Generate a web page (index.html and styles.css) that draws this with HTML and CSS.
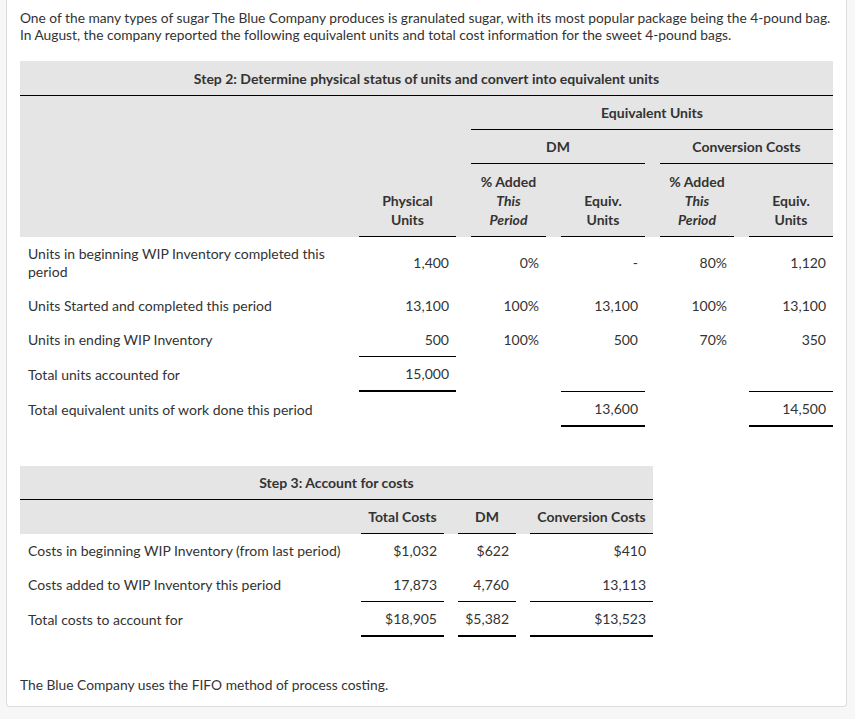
FILE: index.html
```html
<!DOCTYPE html>
<html>
<head>
<meta charset="utf-8">
<link rel="stylesheet" href="styles.css">
</head>
<body>
<div class="card">
  <p class="intro">One of the many types of sugar The Blue Company produces is granulated sugar, with its most popular package being the 4-pound bag. In August, the company reported the following equivalent units and total cost information for the sweet 4-pound bags.</p>

  <table class="tbl step2">
    <colgroup>
      <col class="c-label2"><col class="c-phys"><col class="c-add"><col class="c-eq"><col class="c-add2"><col class="c-eq">
    </colgroup>
    <thead>
      <tr class="title-row"><th colspan="6">Step 2: Determine physical status of units and convert into equivalent units</th></tr>
      <tr class="hrow"><th></th><th></th><th colspan="4" class="hc"><div class="hd ul">Equivalent Units</div></th></tr>
      <tr class="hrow"><th></th><th></th><th colspan="2" class="hc"><div class="hd ul">DM</div></th><th colspan="2" class="hc"><div class="hd ul">Conversion Costs</div></th></tr>
      <tr class="hrow">
        <th></th>
        <th class="hc"><div class="hd tall ul">Physical<br>Units</div></th>
        <th class="hc"><div class="hd tall ul">% Added<br><i>This</i><br><i>Period</i></div></th>
        <th class="hc"><div class="hd tall ul">Equiv.<br>Units</div></th>
        <th class="hc"><div class="hd tall ul">% Added<br><i>This</i><br><i>Period</i></div></th>
        <th class="hc"><div class="hd tall ul">Equiv.<br>Units</div></th>
      </tr>
    </thead>
    <tbody>
      <tr>
        <td class="lbl">Units in beginning WIP Inventory completed this period</td>
        <td class="nc"><div class="num">1,400</div></td>
        <td class="nc"><div class="num">0%</div></td>
        <td class="nc"><div class="num">-</div></td>
        <td class="nc"><div class="num">80%</div></td>
        <td class="nc"><div class="num">1,120</div></td>
      </tr>
      <tr>
        <td class="lbl">Units Started and completed this period</td>
        <td class="nc"><div class="num">13,100</div></td>
        <td class="nc"><div class="num">100%</div></td>
        <td class="nc"><div class="num">13,100</div></td>
        <td class="nc"><div class="num">100%</div></td>
        <td class="nc"><div class="num">13,100</div></td>
      </tr>
      <tr>
        <td class="lbl">Units in ending WIP Inventory</td>
        <td class="nc"><div class="num ul">500</div></td>
        <td class="nc"><div class="num ulx">100%</div></td>
        <td class="nc"><div class="num ulx">500</div></td>
        <td class="nc"><div class="num ulx">70%</div></td>
        <td class="nc"><div class="num ulx">350</div></td>
      </tr>
      <tr>
        <td class="lbl">Total units accounted for</td>
        <td class="nc"><div class="num ul2">15,000</div></td>
        <td class="nc"><div class="num ul2x">&nbsp;</div></td>
        <td class="nc"><div class="num ul2t">&nbsp;</div></td>
        <td class="nc"><div class="num ul2x">&nbsp;</div></td>
        <td class="nc"><div class="num ul2t">&nbsp;</div></td>
      </tr>
      <tr>
        <td class="lbl">Total equivalent units of work done this period</td>
        <td class="nc"><div class="num ul2x">&nbsp;</div></td>
        <td class="nc"><div class="num ul2x">&nbsp;</div></td>
        <td class="nc"><div class="num ul2">13,600</div></td>
        <td class="nc"><div class="num ul2x">&nbsp;</div></td>
        <td class="nc"><div class="num ul2">14,500</div></td>
      </tr>
    </tbody>
  </table>

  <table class="tbl step3">
    <colgroup>
      <col class="c-label3"><col class="c-tot"><col class="c-dm"><col class="c-cc">
    </colgroup>
    <thead>
      <tr class="title-row"><th colspan="4">Step 3: Account for costs</th></tr>
      <tr class="hrow">
        <th></th>
        <th class="hc3"><div class="hd ul">Total Costs</div></th>
        <th class="hc3"><div class="hd ul">DM</div></th>
        <th class="hc3"><div class="hd ul">Conversion Costs</div></th>
      </tr>
    </thead>
    <tbody>
      <tr>
        <td class="lbl">Costs in beginning WIP Inventory (from last period)</td>
        <td class="nc3"><div class="num">$1,032</div></td>
        <td class="nc3"><div class="num">$622</div></td>
        <td class="nc3"><div class="num">$410</div></td>
      </tr>
      <tr>
        <td class="lbl">Costs added to WIP Inventory this period</td>
        <td class="nc3"><div class="num ul">17,873</div></td>
        <td class="nc3"><div class="num ul">4,760</div></td>
        <td class="nc3"><div class="num ul">13,113</div></td>
      </tr>
      <tr>
        <td class="lbl">Total costs to account for</td>
        <td class="nc3"><div class="num ul2">$18,905</div></td>
        <td class="nc3"><div class="num ul2">$5,382</div></td>
        <td class="nc3"><div class="num ul2">$13,523</div></td>
      </tr>
    </tbody>
  </table>

  <p class="outro">The Blue Company uses the FIFO method of process costing.</p>
</div>
</body>
</html>
```

FILE: styles.css
```css
html, body {
  margin: 0;
  padding: 0;
  background: #f7f7f7;
}
body {
  font-family: Lato, "Open Sans", "Liberation Sans", sans-serif;
  font-size: 14px;
  color: #333;
}
.card {
  width: 813px;
  margin-left: 6px;
  padding: 9px 13px 13px 13px;
  background: #fff;
  border: 1px solid #dcdcdc;
  border-top: none;
  border-radius: 0 0 4px 4px;
}
.intro {
  margin: 0;
  font-size: 13.75px;
  line-height: 17px;
}
.outro {
  margin: 39px 0 0 0;
  font-size: 13.8px;
  line-height: 17px;
}
.tbl {
  border-collapse: separate;
  border-spacing: 0;
  table-layout: fixed;
}
.step2 {
  width: 813px;
  margin-top: 18px;
}
.step3 {
  width: 633px;
  margin-top: 39px;
}
.c-label2 { width: 324px; }
.c-phys { width: 112px; }
.c-add { width: 90px; }
.c-eq { width: 99px; }
.c-add2 { width: 89px; }
.c-label3 { width: 327px; }
.c-tot { width: 97px; }
.c-dm { width: 72px; }
.c-cc { width: 137px; }

.tbl th {
  background: #e5e5e5;
  font-weight: 700;
  line-height: 19px;
  padding: 0;
}
.title-row th {
  padding: 8px 0 7px;
  text-align: center;
  border-bottom: 1px solid #000;
}
.step3 .title-row th {
  padding-top: 7px;
}
.hrow th {
  vertical-align: bottom;
}
.hc {
  padding-left: 15px !important;
}
.hc3 {
  padding-left: 14px !important;
}
.hd {
  padding: 7px 0 7px;
  text-align: center;
}
.hd.tall {
  padding-top: 8px;
}
.hd i {
  font-style: italic;
}
.ul {
  border-bottom: 1px solid #000;
}
.ul2 {
  border-bottom: 2px solid #000;
}
.tbl td {
  padding: 0;
  line-height: 18px;
  vertical-align: middle;
}
.lbl {
  padding: 8px 4px 8px 8px !important;
}
.nc {
  padding-left: 15px !important;
}
.nc3 {
  padding-left: 14px !important;
}
.num {
  text-align: right;
  padding: 8px 7px 8px 0;
  min-height: 18px;
}
.num.ul, .num.ulx {
  padding-bottom: 7px;
}
.num.ulx {
  border-bottom: 1px solid transparent;
}
.num.ul2, .num.ul2x, .num.ul2t {
  padding-bottom: 7px;
}
.num.ul2x {
  border-bottom: 2px solid transparent;
}
.num.ul2t {
  padding-bottom: 8px;
  border-bottom: 1px solid #000;
}
```
